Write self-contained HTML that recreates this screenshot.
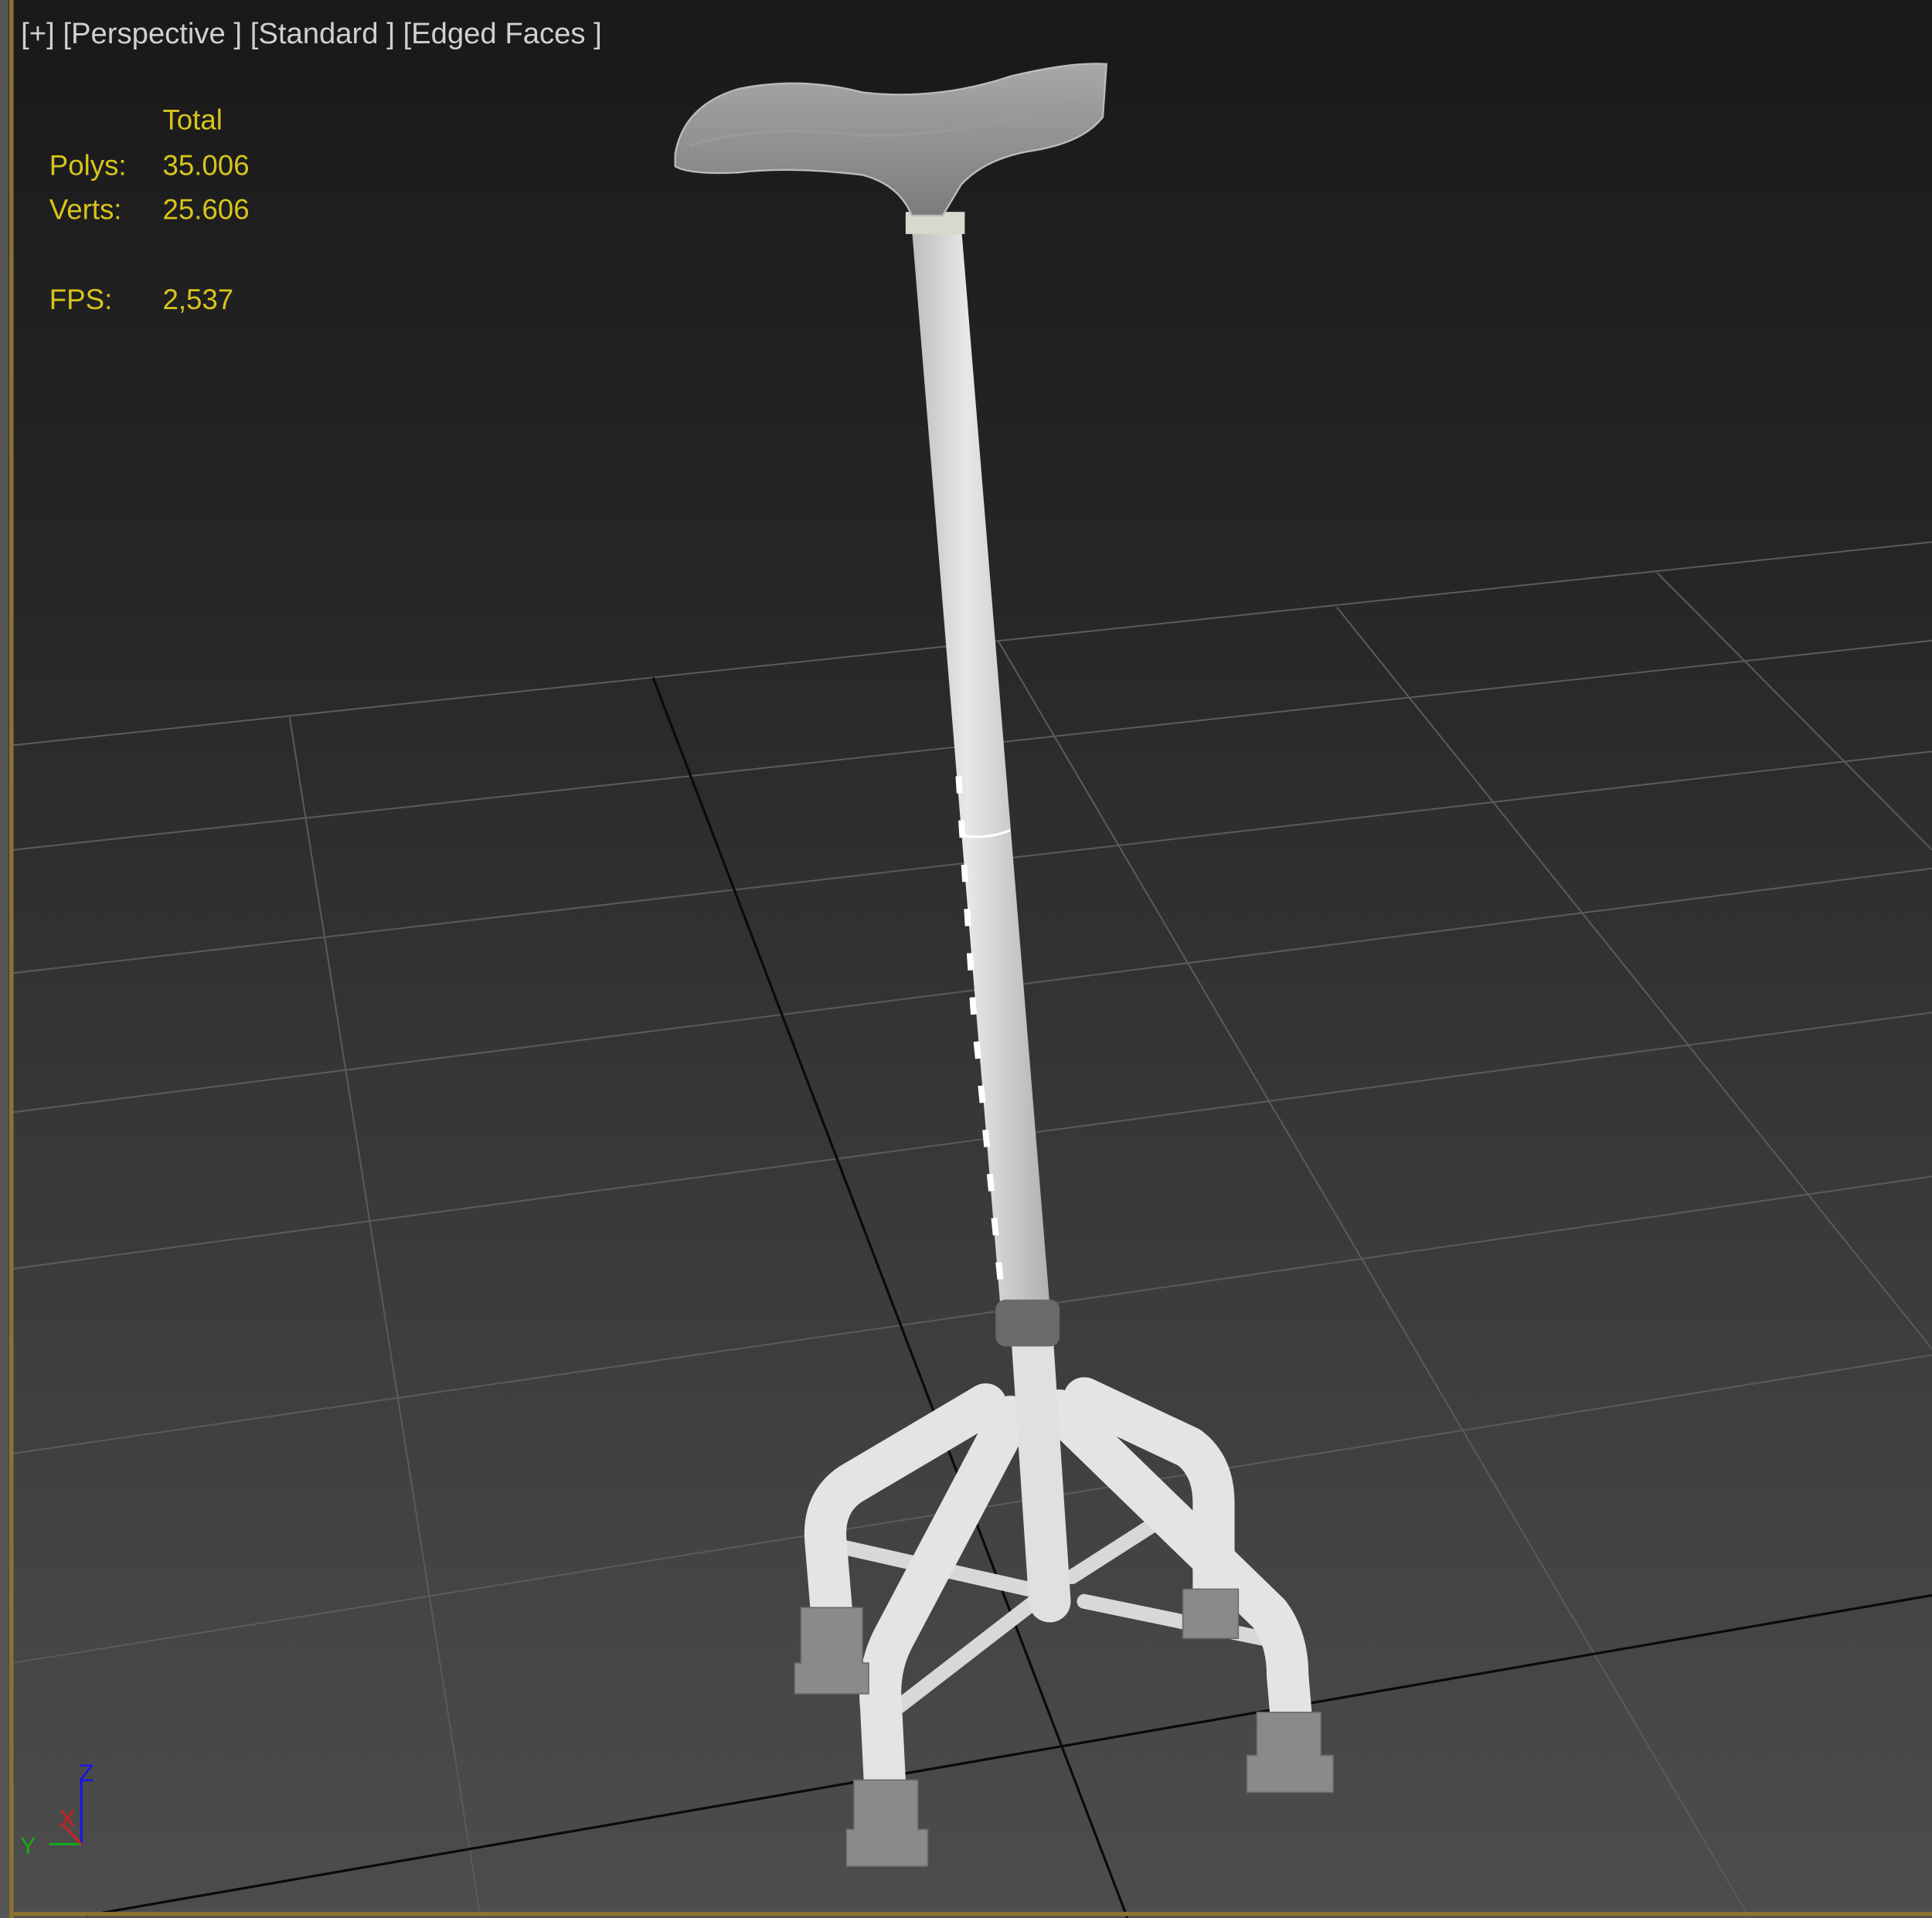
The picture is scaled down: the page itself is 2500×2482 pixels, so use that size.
<!DOCTYPE html>
<html><head><meta charset="utf-8"><style>
html,body{margin:0;padding:0;background:#1a1a1a;}
svg{display:block;}
</style></head><body>
<svg width="2500" height="2482" viewBox="0 0 1568 1557" preserveAspectRatio="none" xmlns="http://www.w3.org/2000/svg">
<defs>
<linearGradient id="bg" x1="0" y1="0" x2="0" y2="1">
<stop offset="0" stop-color="#191919"/>
<stop offset="0.3" stop-color="#262626"/>
<stop offset="0.6" stop-color="#383838"/>
<stop offset="1" stop-color="#4d4d4d"/>
</linearGradient>
<linearGradient id="shaft" x1="0" y1="0" x2="1" y2="0">
<stop offset="0" stop-color="#bdbdbd"/>
<stop offset="0.4" stop-color="#e8e8e8"/>
<stop offset="1" stop-color="#b0b0b0"/>
</linearGradient>
<linearGradient id="handle" x1="0" y1="0" x2="0" y2="1">
<stop offset="0" stop-color="#a8a8a8"/>
<stop offset="1" stop-color="#7c7c7c"/>
</linearGradient>
</defs>
<rect width="1568" height="1557" fill="url(#bg)"/>
<rect x="0" y="0" width="7" height="1557" fill="#555"/>
<g stroke="#5a5a5a" stroke-width="1.3" fill="none">
<line x1="10" y1="605" x2="1568" y2="440"/>
<line x1="10" y1="690" x2="1568" y2="520"/>
<line x1="10" y1="790" x2="1568" y2="610"/>
<line x1="10" y1="903" x2="1568" y2="705"/>
<line x1="10" y1="1030" x2="1568" y2="822"/>
<line x1="10" y1="1180" x2="1568" y2="955"/>
<line x1="10" y1="1350" x2="1568" y2="1100"/>
<line x1="235" y1="582" x2="390" y2="1557"/>
<line x1="810" y1="520" x2="1420" y2="1557"/>
<line x1="1085" y1="493" x2="1568" y2="1095"/>
<line x1="1345" y1="465" x2="1568" y2="690"/>
</g>
<g stroke="#0a0a0a" stroke-width="2" fill="none">
<line x1="530" y1="550" x2="915" y2="1557"/>
<line x1="70" y1="1555" x2="1568" y2="1295"/>
</g>
<rect x="7.5" y="0" width="3.5" height="1557" fill="#8a7230"/>
<rect x="7.5" y="1552" width="1561" height="3.5" fill="#8a7230"/>
<text x="17" y="35" font-family="Liberation Sans, sans-serif" font-size="24" fill="#d0d0d0">[+] [Perspective ] [Standard ] [Edged Faces ]</text>
<g font-family="Liberation Sans, sans-serif" font-size="23" fill="#d8c41c">
<text x="132" y="105">Total</text>
<text x="40" y="142">Polys:</text><text x="132" y="142">35.006</text>
<text x="40" y="178">Verts:</text><text x="132" y="178">25.606</text>
<text x="40" y="251">FPS:</text><text x="132" y="251">2,537</text>
</g>
<line x1="66" y1="1497" x2="66" y2="1445" stroke="#1515ee" stroke-width="2"/>
<line x1="66" y1="1497" x2="40" y2="1497" stroke="#1aa81a" stroke-width="2"/>
<line x1="66" y1="1497" x2="52" y2="1482" stroke="#cc2020" stroke-width="2"/>
<text x="64" y="1446" font-family="Liberation Sans, sans-serif" font-size="20" fill="#1515ee">Z</text>
<text x="48" y="1483" font-family="Liberation Sans, sans-serif" font-size="20" fill="#cc2020">X</text>
<text x="16" y="1505" font-family="Liberation Sans, sans-serif" font-size="20" fill="#1aa81a">Y</text>
<g fill="none" stroke-linecap="round" stroke-linejoin="round">
<g stroke="#d8d8d8" stroke-width="12">
<line x1="680" y1="1255" x2="835" y2="1290"/>
<line x1="870" y1="1280" x2="945" y2="1232"/>
<line x1="730" y1="1385" x2="840" y2="1300"/>
<line x1="880" y1="1300" x2="1025" y2="1330"/>
</g>
<g stroke="#e4e4e4" stroke-width="34">
<path d="M800 1140 L690 1205 Q668 1220 670 1250 L675 1310"/>
<path d="M880 1135 L965 1175 Q985 1190 985 1220 L985 1290"/>
<path d="M820 1150 L725 1330 Q712 1355 715 1385 L718 1445"/>
<path d="M860 1145 L1030 1310 Q1045 1330 1045 1360 L1048 1395"/>
</g>
<line x1="838" y1="1090" x2="852" y2="1300" stroke="#e0e0e0" stroke-width="34"/>
</g>
<g fill="#8a8a8a" stroke="#6a6a6a">
<path d="M650 1305 h50 v45 h5 v25 h-60 v-25 h5z"/>
<path d="M960 1290 h45 v40 h-45z"/>
<path d="M693 1445 h52 v40 h8 v30 h-66 v-30 h6z"/>
<path d="M1020 1390 h52 v35 h10 v30 h-70 v-30 h8z"/>
</g>
<path d="M740 185 L780 182 L852 1060 L812 1062 Z" fill="url(#shaft)"/>
<path d="M778 630 L790 820 L812 1040" stroke="#fff" stroke-width="5" stroke-dasharray="14 22" fill="none"/>
<path d="M780 678 Q800 682 820 674" stroke="#fff" stroke-width="2" fill="none"/>
<rect x="808" y="1055" width="52" height="38" rx="8" fill="#6a6a6a"/>
<rect x="735" y="172" width="48" height="18" fill="#d8d8cc"/>
<path d="M548 125 Q555 85 600 72 Q650 62 700 75 Q760 82 820 62 Q870 50 898 52 L895 95 Q880 115 840 122 Q800 128 780 150 L765 175 L740 175 Q730 150 700 142 Q640 135 600 140 Q560 142 548 135 Z" fill="url(#handle)" stroke="#bbb" stroke-width="1.5"/>
<path d="M560 118 Q620 100 700 110 Q780 112 880 80" stroke="#9a9a9a" stroke-width="2" fill="none"/>
</svg>
</body></html>
